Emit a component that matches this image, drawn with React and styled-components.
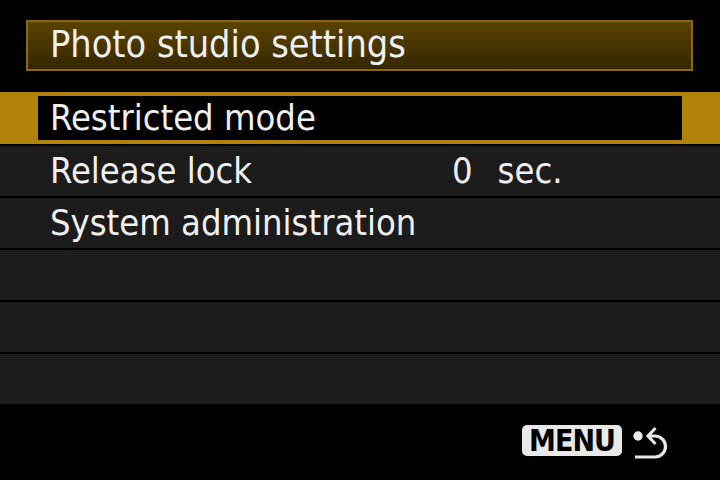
import React from "react";
import styled, { createGlobalStyle } from "styled-components";

const Global = createGlobalStyle`
  html, body { margin: 0; padding: 0; background: #000; }
  body { font-family: "DejaVu Sans Condensed", "DejaVu Sans", sans-serif; }
`;

const Screen = styled.div`
  width: 720px;
  height: 480px;
  background: #000;
  display: flex;
  flex-direction: column;
  overflow: hidden;
`;

const HeaderWrap = styled.div`
  padding: 20px 27px 0 26px;
`;

const Header = styled.div`
  height: 47px;
  border: 2px solid #8a6912;
  background: linear-gradient(180deg, #5a4300 0%, #4a3700 45%, #332600 100%);
  color: #f0f0f0;
  font-size: 37.5px;
  line-height: 45px;
  padding-left: 22px;
  white-space: nowrap;
`;

const List = styled.div`
  margin-top: 21px;
  display: flex;
  flex-direction: column;
  gap: 2px;
  background: #000;
`;

const Row = styled.div`
  height: ${(p) => (p.$selected ? "52px" : "50px")};
  box-sizing: border-box;
  background: ${(p) => (p.$selected ? "#b1830a" : "#1c1c1c")};
  padding: ${(p) => (p.$selected ? "4px 38px" : "0 0 0 50px")};
  display: flex;
`;

const RowInner = styled.div`
  flex: 1;
  display: flex;
  align-items: center;
  background: ${(p) => (p.$selected ? "#000" : "transparent")};
  padding-left: ${(p) => (p.$selected ? "12px" : "0")};
  color: #f0f0f0;
  font-size: 36px;
  line-height: ${(p) => (p.$selected ? "42px" : "48px")};
  white-space: nowrap;
`;

const Label = styled.span`
  width: 402px;
  flex: none;
`;

const Value = styled.span`
  display: flex;
  gap: 25px;
`;

const Footer = styled.div`
  flex: 1;
  display: flex;
  justify-content: flex-end;
  align-items: flex-start;
  padding: 20px 50px 0 0;
  gap: 10px;
`;

const MenuKey = styled.div`
  width: 100px;
  height: 31px;
  margin-top: 1px;
  box-sizing: border-box;
  border-radius: 5px;
  background: #e8e8e8;
  color: #000;
  font-family: "DejaVu Sans Condensed", "DejaVu Sans", sans-serif;
  font-weight: bold;
  font-size: 30px;
  line-height: 31px;
  text-align: center;
  letter-spacing: -1px;
  white-space: nowrap;
`;

const BackIcon = () => (
  <svg width="38" height="38" viewBox="0 0 38 38" fill="none">
    <circle cx="6" cy="12" r="4.7" fill="#e8e8e8" />
    <path d="M17 12 H23 A10.5 10.5 0 0 1 23 33 H3" stroke="#e8e8e8" strokeWidth="3.2" />
    <path d="M23.5 4 L16 12 L23.5 20" stroke="#e8e8e8" strokeWidth="3.2" strokeLinejoin="miter" />
  </svg>
);

const rows = [
  { label: "Restricted mode", selected: true },
  { label: "Release lock", value: ["0", "sec."] },
  { label: "System administration" },
  { label: "" },
  { label: "" },
  { label: "" },
];

export default function App() {
  return (
    <>
      <Global />
      <Screen>
        <HeaderWrap>
          <Header>Photo studio settings</Header>
        </HeaderWrap>
        <List>
          {rows.map((r, i) => (
            <Row key={i} $selected={r.selected}>
              <RowInner $selected={r.selected}>
                <Label>{r.label}</Label>
                {r.value && (
                  <Value>
                    <span>{r.value[0]}</span>
                    <span>{r.value[1]}</span>
                  </Value>
                )}
              </RowInner>
            </Row>
          ))}
        </List>
        <Footer>
          <MenuKey>MENU</MenuKey>
          <BackIcon />
        </Footer>
      </Screen>
    </>
  );
}
